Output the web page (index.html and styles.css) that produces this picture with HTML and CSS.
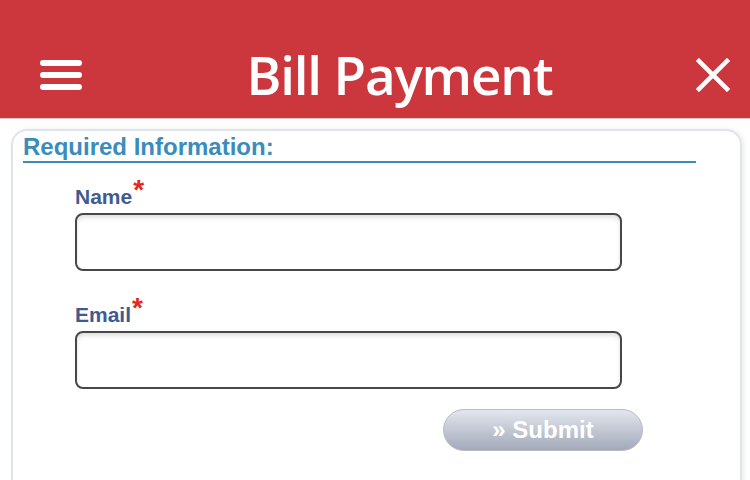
FILE: index.html
```html
<!DOCTYPE html>
<html>
<head>
<meta charset="utf-8">
<link rel="stylesheet" href="styles.css">
</head>
<body>
<header class="topbar">
  <button class="icon-btn menu" aria-label="Menu">
    <svg width="42" height="32" viewBox="0 0 42 32"><g stroke="#fff" stroke-width="6" stroke-linecap="round"><line x1="3" y1="4" x2="39" y2="4"/><line x1="3" y1="16" x2="39" y2="16"/><line x1="3" y1="28" x2="39" y2="28"/></g></svg>
  </button>
  <h1 class="title">Bill Payment</h1>
  <button class="icon-btn close" aria-label="Close">
    <svg width="34" height="34" viewBox="0 0 34 34"><g stroke="#fff" stroke-width="4.5" stroke-linecap="square"><line x1="3" y1="3" x2="31" y2="31"/><line x1="31" y1="3" x2="3" y2="31"/></g></svg>
  </button>
</header>
<main class="card">
  <h2 class="section">Required Information:</h2>
  <form class="form">
    <label class="field">
      <span class="label">Name<span class="req">*</span></span>
      <input class="input" type="text">
    </label>
    <label class="field">
      <span class="label">Email<span class="req">*</span></span>
      <input class="input" type="text">
    </label>
    <div class="actions">
      <button type="button" class="submit">» Submit</button>
    </div>
  </form>
</main>
</body>
</html>
```
FILE: styles.css
```css
* { box-sizing: border-box; }
html, body { margin: 0; padding: 0; background: #fff; }
body { font-family: "Liberation Sans", Arial, sans-serif; width: 750px; height: 480px; overflow: hidden; }

.topbar {
  height: 119px;
  background: #cc363d;
  border-bottom: 1px solid #d9c9ca;
  display: grid;
  grid-template-columns: 1fr auto 1fr;
  align-items: start;
  padding: 0 20px 0 40px;
}
.icon-btn { background: none; border: 0; padding: 0; display: flex; }
.menu { margin-top: 59px; justify-self: start; }
.close { margin-top: 58px; justify-self: end; }
.title {
  margin: 48px 0 0 29px;
  color: #fff;
  font-family: "Open Sans", sans-serif;
  font-weight: 600;
  font-size: 53px;
  line-height: 53px;
  letter-spacing: -1.2px;
  white-space: nowrap;
}

.card {
  margin: 10px 8px 0 11px;
  height: 400px;
  border: 2px solid #dde4ea;
  border-radius: 16px;
  padding: 3px 44px 0 10px;
  box-shadow: 2px 0 4px rgba(0,0,0,0.08);
}
.section {
  margin: 0;
  color: #3a8cbc;
  font-size: 24px;
  font-weight: bold;
  line-height: 26px;
  border-bottom: 2px solid #3a8cbc;
  padding-bottom: 1px;
  white-space: nowrap;
}
.form { padding: 22px 0 0 52px; display: flex; flex-direction: column; }
.field { display: flex; flex-direction: column; margin-bottom: 32px; }
.label { color: #3f5b91; font-weight: bold; font-size: 21px; line-height: 24px; margin-bottom: 4px; }
.req { color: #e5271f; font-size: 28px; line-height: 0; position: relative; top: -5px; margin-left: 1px; }
.input {
  width: 547px;
  height: 58px;
  border: 2px solid #474747;
  border-radius: 8px;
  box-shadow: inset 0 3px 4px rgba(0,0,0,0.12);
  background: #fff;
}
.actions { display: flex; justify-content: flex-end; width: 568px; margin-top: -12px; }
.submit {
  width: 200px;
  height: 42px;
  border-radius: 21px;
  border: 1px solid #b8bbc2;
  background: linear-gradient(#e3e6ee, #a3a9b9);
  color: #fff;
  font-family: "Liberation Sans", Arial, sans-serif;
  font-weight: bold;
  font-size: 24px;
}
```
